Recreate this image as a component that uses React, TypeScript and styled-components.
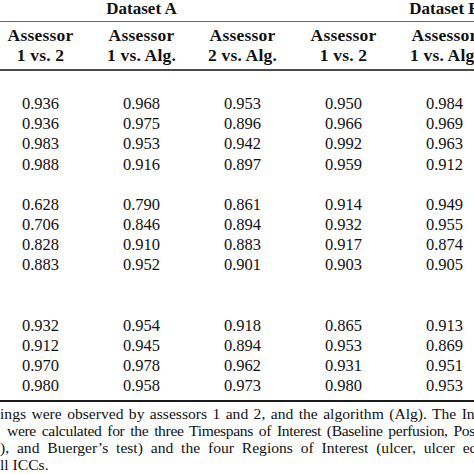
import { createGlobalStyle, styled } from 'styled-components';

const GlobalStyle = createGlobalStyle`
  html, body {
    margin: 0;
    padding: 0;
    background: #fff;
    overflow: hidden;
  }
  body {
    width: 474px;
    height: 474px;
    color: #111;
    font-family: 'Liberation Serif', 'Times New Roman', serif;
  }
`;

const headers = [
  ['Assessor', '1 vs. 2'],
  ['Assessor', '1 vs. Alg.'],
  ['Assessor', '2 vs. Alg.'],
  ['Assessor', '1 vs. 2'],
  ['Assessor', '1 vs. Alg.'],
  ['Assessor', '2 vs. Alg.'],
];

// null = spacer row (group label lives in the cropped-off column)
const rows: Array<string[] | null> = [
  null,
  ['0.936', '0.968', '0.953', '0.950', '0.984'],
  ['0.936', '0.975', '0.896', '0.966', '0.969'],
  ['0.983', '0.953', '0.942', '0.992', '0.963'],
  ['0.988', '0.916', '0.897', '0.959', '0.912'],
  null,
  ['0.628', '0.790', '0.861', '0.914', '0.949'],
  ['0.706', '0.846', '0.894', '0.932', '0.955'],
  ['0.828', '0.910', '0.883', '0.917', '0.874'],
  ['0.883', '0.952', '0.901', '0.903', '0.905'],
  null,
  null,
  ['0.932', '0.954', '0.918', '0.865', '0.913'],
  ['0.912', '0.945', '0.894', '0.953', '0.869'],
  ['0.970', '0.978', '0.962', '0.931', '0.951'],
  ['0.980', '0.958', '0.973', '0.980', '0.953'],
];

const captionLines = [
  {
    text: 'ings were observed by assessors 1 and 2, and the algorithm (Alg). The Int',
    indent: 0,
    width: 479,
    tracking: 0,
  },
  {
    text: 'were calculated for the three Timespans of Interest (Baseline perfusion, Post',
    indent: 7,
    width: 472,
    tracking: -0.35,
  },
  {
    text: '), and Buerger\u2019s test) and the four Regions of Interest (ulcer, ulcer edge,',
    indent: 0,
    width: 496,
    tracking: 0,
  },
];

const App = () => {
  return (
    <>
      <GlobalStyle />
      <Page>
        <Table>
          <GroupRow>
            <GroupTitle $span={3}>Dataset A</GroupTitle>
            <GroupTitle $span={3}>Dataset B</GroupTitle>
          </GroupRow>
          <HeaderRow>
            {headers.map((h, i) => (
              <HeaderCell key={i}>
                <div>{h[0]}</div>
                <div>{h[1]}</div>
              </HeaderCell>
            ))}
          </HeaderRow>
          <Body>
            {rows.map((r, i) => (
              <Row key={i}>
                {r ? r.map((v, j) => <Cell key={j}>{v}</Cell>) : <Cell>&nbsp;</Cell>}
              </Row>
            ))}
          </Body>
        </Table>
        <Caption>
          {captionLines.map((l, i) => (
            <CaptionLine
              key={i}
              $indent={l.indent}
              $width={l.width}
              $tracking={l.tracking}
              $justify
            >
              {l.text}
            </CaptionLine>
          ))}
          <CaptionLine $indent={0} $width={474} $tracking={0}>
            ll ICCs.
          </CaptionLine>
        </Caption>
      </Page>
    </>
  );
};

export default App;

const Page = styled.div`
  width: 474px;
  height: 474px;
  overflow: hidden;
`;

const Table = styled.div`
  display: flex;
  flex-direction: column;
  width: 606px;
  margin-left: -10px;
  border-bottom: 2px solid #1a1a1a;
`;

const GroupRow = styled.div`
  display: grid;
  grid-template-columns: repeat(6, 101px);
  height: 21px;
  border-bottom: 1px solid #6a6a6a;
`;

const GroupTitle = styled.div<{ $span: number }>`
  grid-column: span ${(p) => p.$span};
  text-align: center;
  font-size: 17px;
  font-weight: 700;
  line-height: 17px;
`;

const HeaderRow = styled.div`
  display: grid;
  grid-template-columns: repeat(6, 101px);
  padding: 4px 0 4px;
  border-bottom: 2px solid #4a4a4a;
`;

const HeaderCell = styled.div`
  text-align: center;
  font-size: 17.5px;
  font-weight: 700;
  line-height: 19.5px;
  letter-spacing: 0.2px;
`;

const Body = styled.div`
  display: flex;
  flex-direction: column;
  padding: 3px 0 4px;
`;

const Row = styled.div`
  display: grid;
  grid-template-columns: repeat(6, 101px);
  height: 20.15px;
  line-height: 20.15px;
`;

const Cell = styled.div`
  text-align: center;
  font-size: 16.5px;
`;

const Caption = styled.div`
  display: flex;
  flex-direction: column;
  padding-top: 3px;
`;

const CaptionLine = styled.div<{
  $indent: number;
  $width: number;
  $tracking: number;
  $justify?: boolean;
}>`
  flex: none;
  width: ${(p) => p.$width}px;
  margin-left: ${(p) => p.$indent}px;
  height: 17px;
  font-size: 15.6px;
  line-height: 17px;
  letter-spacing: ${(p) => p.$tracking}px;
  white-space: ${(p) => (p.$justify ? 'normal' : 'nowrap')};
  text-align: ${(p) => (p.$justify ? 'justify' : 'left')};
  text-align-last: ${(p) => (p.$justify ? 'justify' : 'left')};
  overflow: hidden;
`;
